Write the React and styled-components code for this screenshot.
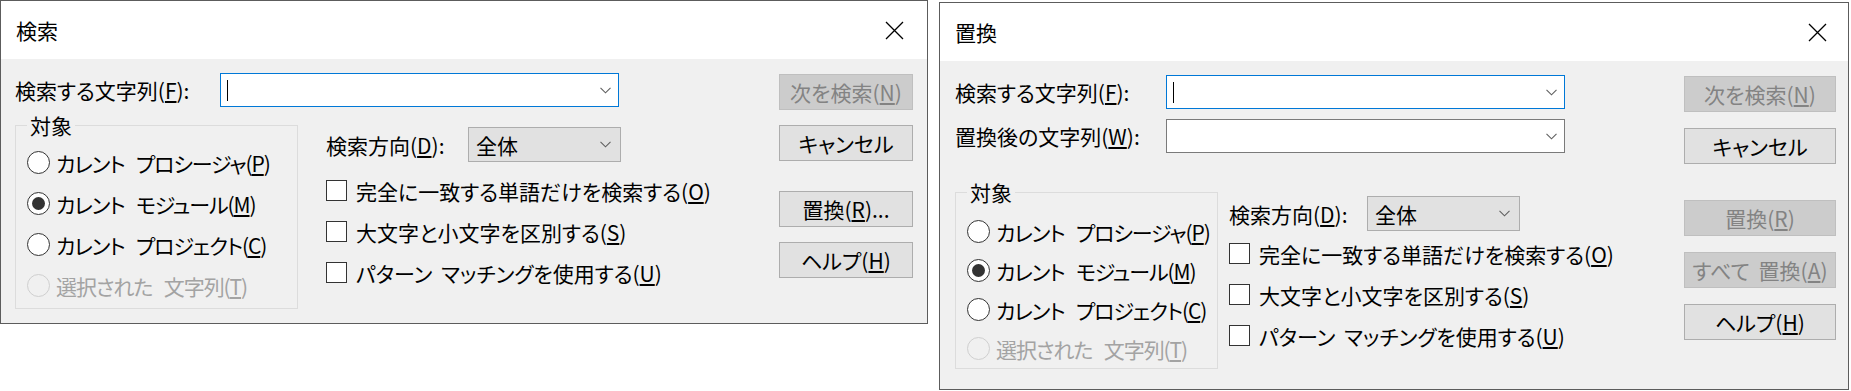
import styled, { createGlobalStyle } from "styled-components"

const GlobalStyle = createGlobalStyle`
  body {
    margin: 0;
    background: #fff;
    font-family: "Noto Sans CJK JP", "Liberation Sans", sans-serif;
  }
`

const Page = styled.div`
  display: flex;
  align-items: flex-start;
  gap: 11px;
  width: 1851px;
  height: 391px;
  overflow: hidden;
`

const Dialog = styled.div`
  box-sizing: border-box;
  width: ${p => p.$w}px;
  height: ${p => p.$h}px;
  margin-top: ${p => p.$top || 0}px;
  border: 1px solid #5c5c5c;
  background: #f0f0f0;
  display: flex;
  flex-direction: column;
  font-size: 21px;
  font-feature-settings: "palt";
  word-spacing: 4px;
  color: #000;
`

const TitleBar = styled.div`
  height: 58px;
  flex-shrink: 0;
  background: #fff;
  display: flex;
  align-items: center;
  justify-content: space-between;
  padding: 0 ${p => p.$right}px 0 15px;
`

const Title = styled.span`
  line-height: 1;
`

const Body = styled.div`
  flex: 1;
  display: flex;
  padding: 14px ${p => p.$right}px 0 ${p => p.$left}px;
`

const Main = styled.div`
  flex: 1;
  display: flex;
  flex-direction: column;
`

const FieldRow = styled.div`
  display: flex;
  align-items: center;
  height: 34px;
  margin-top: ${p => p.$gap || 0}px;
`

const Label = styled.span`
  width: ${p => p.$w}px;
  flex-shrink: 0;
  white-space: nowrap;
`

const Combo = styled.div`
  box-sizing: border-box;
  width: 399px;
  height: 34px;
  background: #fff;
  border: 1px solid ${p => (p.$focus ? "#0078d7" : "#7a7a7a")};
  display: flex;
  align-items: center;
  justify-content: space-between;
  padding: 0 7px 0 6px;
`

const Caret = styled.span`
  width: 1px;
  height: 21px;
  background: #000;
`

const Lower = styled.div`
  display: flex;
  margin-top: ${p => p.$gap}px;
`

const Group = styled.fieldset`
  box-sizing: border-box;
  width: ${p => p.$w}px;
  margin: 0;
  padding: ${p => p.$pad}px 0 ${p => p.$padBottom}px 11px;
  border: 1px solid #dcdcdc;
  min-width: 0;
`

const Legend = styled.legend`
  padding: 0 3px;
  line-height: 22px;
`

const RadioRow = styled.div`
  display: flex;
  align-items: center;
  gap: 6px;
  height: ${p => p.$h}px;
  color: ${p => (p.$disabled ? "#a3a3a3" : "#000")};
`

const RadioCircle = styled.span`
  box-sizing: border-box;
  width: 23px;
  height: 23px;
  flex-shrink: 0;
  border-radius: 50%;
  border: 1.5px solid ${p => (p.$disabled ? "#cfcfcf" : "#333")};
  background: ${p => (p.$disabled ? "#f0f0f0" : "#fff")};
  display: flex;
  align-items: center;
  justify-content: center;
`

const RadioDot = styled.span`
  width: 13px;
  height: 13px;
  border-radius: 50%;
  background: #333;
`

const RadioText = styled.span`
  white-space: nowrap;
  letter-spacing: -1.1px;
  word-spacing: 8px;
`

const Options = styled.div`
  display: flex;
  flex-direction: column;
  margin-left: ${p => p.$left}px;
  padding-top: ${p => p.$top}px;
`

const DirRow = styled.div`
  display: flex;
  align-items: center;
  height: 35px;
`

const Select = styled.div`
  box-sizing: border-box;
  width: 153px;
  height: 35px;
  background: #e1e1e1;
  border: 1px solid #adadad;
  display: flex;
  align-items: center;
  justify-content: space-between;
  padding: 0 9px 0 7px;
`

const CheckList = styled.div`
  display: flex;
  flex-direction: column;
  margin-top: ${p => p.$gap}px;
`

const CheckRow = styled.div`
  display: flex;
  align-items: center;
  gap: 9px;
  height: ${p => p.$h}px;
  white-space: nowrap;
`

const CheckBox = styled.span`
  box-sizing: border-box;
  width: 21px;
  height: 21px;
  flex-shrink: 0;
  border: 1px solid #333;
  background: #fff;
`

const Buttons = styled.div`
  width: ${p => p.$w}px;
  display: flex;
  flex-direction: column;
`

const Button = styled.div`
  box-sizing: border-box;
  height: 36px;
  margin-top: ${p => p.$gap || 0}px;
  display: flex;
  align-items: center;
  justify-content: center;
  background: ${p => (p.$disabled ? "#cccccc" : "#e1e1e1")};
  border: 1px solid ${p => (p.$disabled ? "#bfbfbf" : "#adadad")};
  color: ${p => (p.$disabled ? "#838383" : "#000")};
  white-space: nowrap;
`

const Key = styled.u`
  text-underline-offset: 2px;
`

const Close = () => (
  <svg width="19" height="19" viewBox="0 0 19 19">
    <path d="M1 1 L18 18 M18 1 L1 18" stroke="#000" strokeWidth="1.3" fill="none" />
  </svg>
)

const Chevron = () => (
  <svg width="11" height="7" viewBox="0 0 11 7">
    <path d="M0.5 0.8 L5.5 5.8 L10.5 0.8" stroke="#606060" strokeWidth="1.1" fill="none" />
  </svg>
)

const Radio = ({ checked, disabled, h, children }) => (
  <RadioRow $h={h} $disabled={disabled}>
    <RadioCircle $disabled={disabled}>{checked && <RadioDot />}</RadioCircle>
    <RadioText>{children}</RadioText>
  </RadioRow>
)

const Check = ({ h, children }) => (
  <CheckRow $h={h}>
    <CheckBox />
    <span>{children}</span>
  </CheckRow>
)

const TargetGroup = ({ w, pad, padBottom, rowH }) => (
  <Group $w={w} $pad={pad} $padBottom={padBottom}>
    <Legend>対象</Legend>
    <Radio h={rowH}>カレント プロシージャ(<Key>P</Key>)</Radio>
    <Radio h={rowH} checked>カレント モジュール(<Key>M</Key>)</Radio>
    <Radio h={rowH}>カレント プロジェクト(<Key>C</Key>)</Radio>
    <Radio h={rowH} disabled>選択された 文字列(<Key>T</Key>)</Radio>
  </Group>
)

const SearchOptions = ({ left, top, labelW, gap, rowH }) => (
  <Options $left={left} $top={top}>
    <DirRow>
      <Label $w={labelW}>検索方向(<Key>D</Key>):</Label>
      <Select>
        <span>全体</span>
        <Chevron />
      </Select>
    </DirRow>
    <CheckList $gap={gap}>
      <Check h={rowH}>完全に一致する単語だけを検索する(<Key>O</Key>)</Check>
      <Check h={rowH}>大文字と小文字を区別する(<Key>S</Key>)</Check>
      <Check h={rowH}>パターン マッチングを使用する(<Key>U</Key>)</Check>
    </CheckList>
  </Options>
)

const FindDialog = () => (
  <Dialog $w={928} $h={324}>
    <TitleBar $right={23}>
      <Title>検索</Title>
      <Close />
    </TitleBar>
    <Body $left={14} $right={14}>
      <Main>
        <FieldRow>
          <Label $w={205}>検索する文字列(<Key>F</Key>):</Label>
          <Combo $focus>
            <Caret />
            <Chevron />
          </Combo>
        </FieldRow>
        <Lower $gap={7}>
          <TargetGroup w={283} pad={6} padBottom={2} rowH={41} />
          <SearchOptions left={28} top={13} labelW={142} gap={8} rowH={41} />
        </Lower>
      </Main>
      <Buttons $w={134}>
        <Button $disabled $gap={1}>次を検索(<Key>N</Key>)</Button>
        <Button $gap={15}>キャンセル</Button>
        <Button $gap={30}>置換(<Key>R</Key>)...</Button>
        <Button $gap={15}>ヘルプ(<Key>H</Key>)</Button>
      </Buttons>
    </Body>
  </Dialog>
)

const ReplaceDialog = () => (
  <Dialog $w={910} $h={388} $top={2}>
    <TitleBar $right={21}>
      <Title>置換</Title>
      <Close />
    </TitleBar>
    <Body $left={15} $right={12}>
      <Main>
        <FieldRow>
          <Label $w={211}>検索する文字列(<Key>F</Key>):</Label>
          <Combo $focus>
            <Caret />
            <Chevron />
          </Combo>
        </FieldRow>
        <FieldRow $gap={10}>
          <Label $w={211}>置換後の文字列(<Key>W</Key>):</Label>
          <Combo>
            <span />
            <Chevron />
          </Combo>
        </FieldRow>
        <Lower $gap={28}>
          <TargetGroup w={263} pad={9} padBottom={0} rowH={39} />
          <SearchOptions left={11} top={15} labelW={138} gap={2} rowH={41} />
        </Lower>
      </Main>
      <Buttons $w={152}>
        <Button $disabled $gap={1}>次を検索(<Key>N</Key>)</Button>
        <Button $gap={16}>キャンセル</Button>
        <Button $disabled $gap={36}>置換(<Key>R</Key>)</Button>
        <Button $disabled $gap={16}>すべて 置換(<Key>A</Key>)</Button>
        <Button $gap={16}>ヘルプ(<Key>H</Key>)</Button>
      </Buttons>
    </Body>
  </Dialog>
)

export default function App() {
  return (
    <>
      <GlobalStyle />
      <Page>
        <FindDialog />
        <ReplaceDialog />
      </Page>
    </>
  )
}
